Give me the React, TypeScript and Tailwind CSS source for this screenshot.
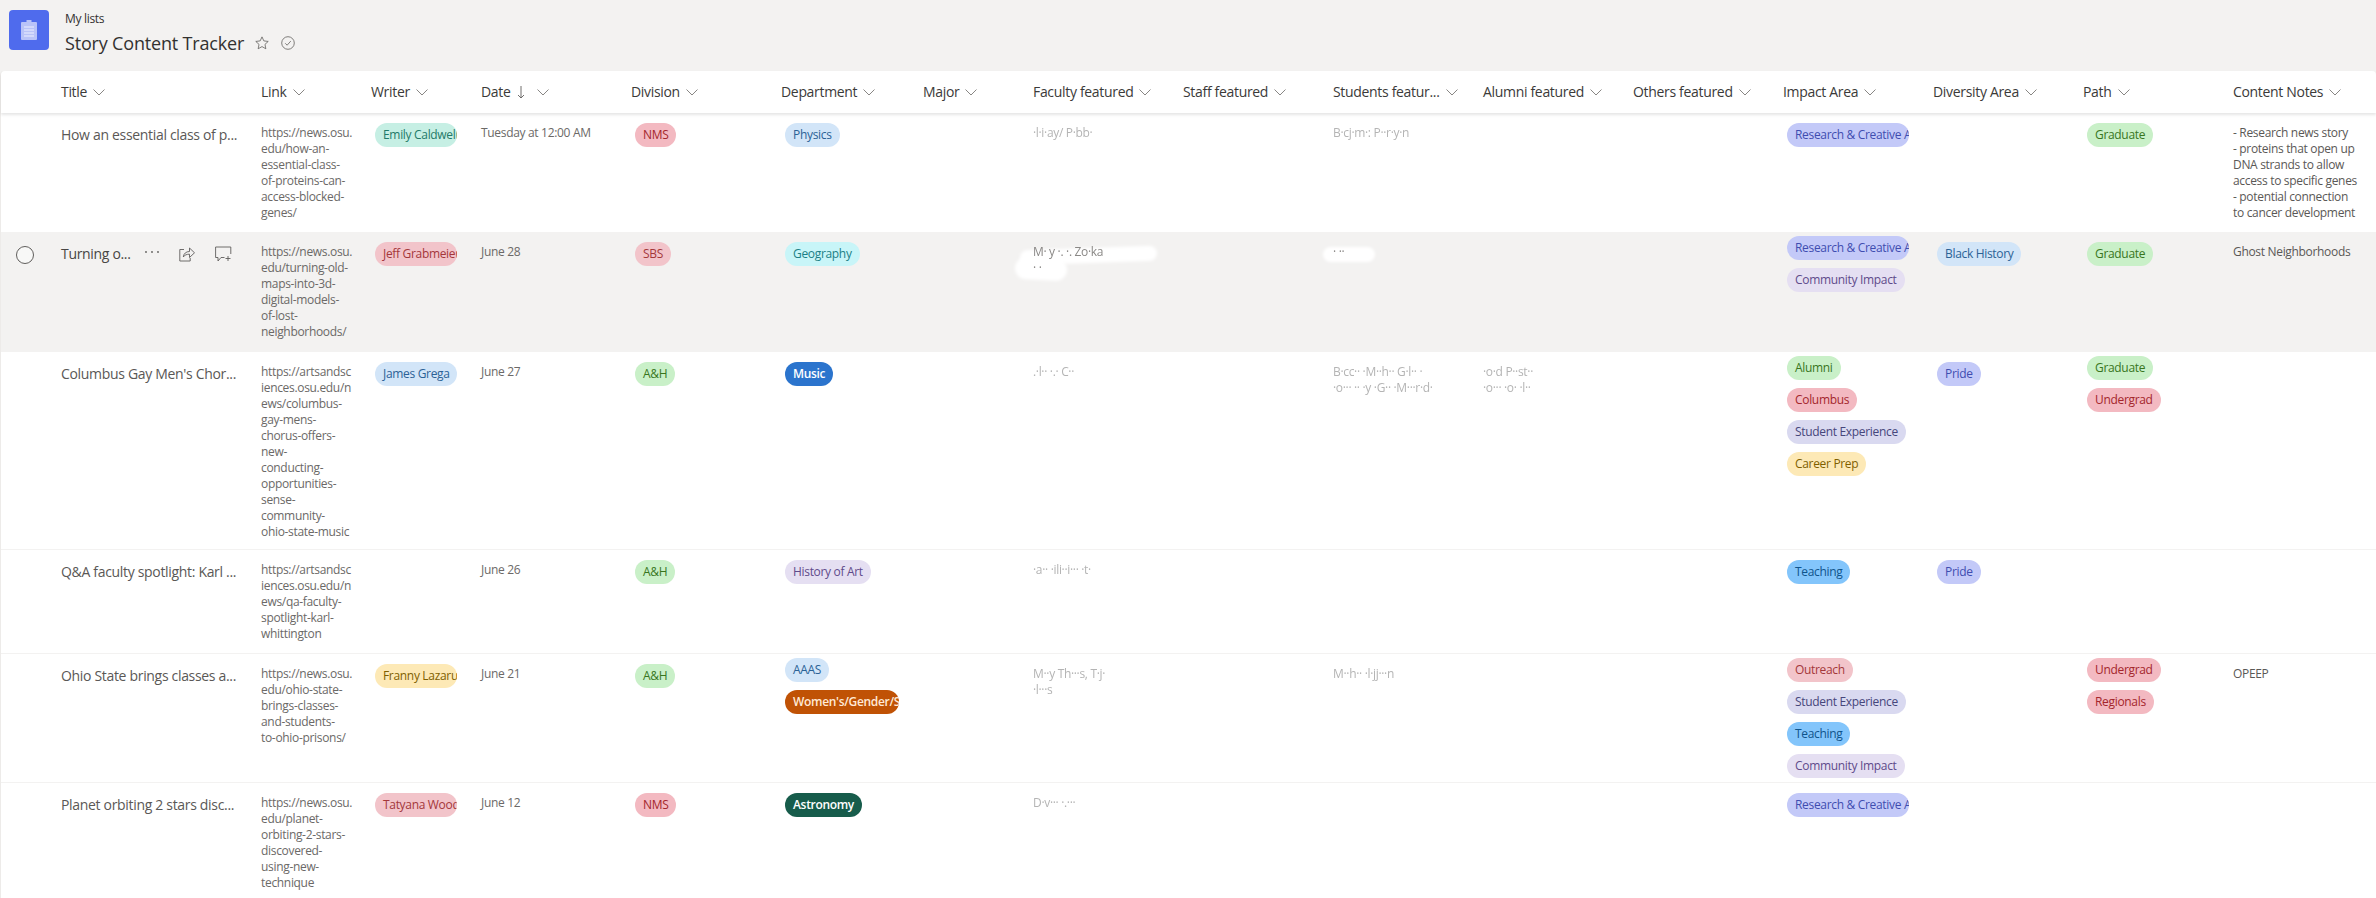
import React from 'react';

const gridCols =
  'grid grid-cols-[60px_200px_110px_110px_150px_150px_142px_110px_150px_150px_150px_150px_150px_150px_150px_150px_143px]';

const columns = [
  'Title', 'Link', 'Writer', 'Date', 'Division', 'Department', 'Major', 'Faculty featured', 'Staff featured',
  'Students featur...', 'Alumni featured', 'Others featured', 'Impact Area', 'Diversity Area', 'Path', 'Content Notes',
];

// pill colours, fluent style tints
const tone = {
  teal: 'bg-[#c6efe4] text-[#1f7a68]',
  red: 'bg-[#f3b9c1] text-[#a4262c]',
  rose: 'bg-[#f2c4ca] text-[#a4373a]',
  blue: 'bg-[#d2e5f8] text-[#2b6296]',
  cyan: 'bg-[#c8f5f8] text-[#1b7f86]',
  green: 'bg-[#c9f0c8] text-[#38761d]',
  lilac: 'bg-[#e5dff2] text-[#5f4b8b]',
  indigo: 'bg-[#c3c9f8] text-[#3f4db0]',
  slate: 'bg-[#d9d9f0] text-[#46467c]',
  sky: 'bg-[#83c5fb] text-[#0f548c]',
  yellow: 'bg-[#fde9b6] text-[#7f5f00]',
  music: 'bg-[#2b74cd] text-white font-semibold',
  rust: 'bg-[#c05205] text-[#ffe9d6] font-semibold',
  forest: 'bg-[#175c4b] text-white font-semibold',
};

type Tone = keyof typeof tone;
type Tag = [string, Tone];

function Pill({ label, color }: { label: string; color: Tone }) {
  return (
    <div className={`h-6 max-w-full w-fit rounded-xl px-2 text-xs leading-6 whitespace-nowrap overflow-hidden ${tone[color]}`}>
      {label}
    </div>
  );
}

function Pills({ tags }: { tags?: Tag[] }) {
  if (!tags) return <div />;
  return (
    <div className={`min-w-0 pl-1 pr-6 flex flex-col gap-2 ${tags.length > 1 ? 'pt-1' : 'pt-2.5'}`}>
      {tags.map(([label, color]) => (
        <Pill key={label} label={label} color={color} />
      ))}
    </div>
  );
}

function Lines({ lines, color = 'text-[#6b6967]' }: { lines?: string[]; color?: string }) {
  return (
    <div className={`pt-3 text-xs leading-4 whitespace-nowrap ${color}`}>
      {lines?.map((line) => <div key={line}>{line}</div>)}
    </div>
  );
}

// names scrubbed in the source picture, only broken specks remain
function Scrubbed({ lines, blobs, dark }: { lines?: string[]; blobs?: string[]; dark?: boolean }) {
  return (
    <div className={`relative pt-3 text-xs leading-4 whitespace-nowrap ${dark ? 'text-[#8a8886]' : 'text-[#b4b4b4]'}`}>
      {blobs?.map((b) => <div key={b} className={`absolute bg-white rounded-full blur-[1.5px] ${b}`} />)}
      {lines?.map((line) => <div key={line} className="relative blur-[0.4px]">{line}</div>)}
    </div>
  );
}

function Chevron() {
  return (
    <svg viewBox="0 0 12 7" className="w-3 h-[7px] shrink-0" fill="none" stroke="#7a7876" strokeWidth="0.9">
      <path d="M0.5 0.5 6 6l5.5-5.5" />
    </svg>
  );
}

function Header() {
  return (
    <div className={`${gridCols} relative z-10 h-[42px] items-center bg-white rounded-t shadow-[0_2px_3px_rgba(0,0,0,0.1)]`}>
      <div />
      {columns.map((c) => (
        <div key={c} className="flex items-center gap-1.5 text-sm text-[#3b3a39] whitespace-nowrap">
          <span>{c}</span>
          {c === 'Date' && (
            <svg viewBox="0 0 8 14" className="w-2 h-3.5 mr-1.5" fill="none" stroke="#605e5c" strokeWidth="0.9">
              <path d="M4 1v12M1 10l3 3 3-3" />
            </svg>
          )}
          <Chevron />
        </div>
      ))}
    </div>
  );
}

function RowActions() {
  return (
    <div className="self-start flex items-center mt-3 h-5 text-sm text-[#484644]">
      <span className="w-[83px] whitespace-nowrap">Turning o...</span>
      <svg viewBox="0 0 16 4" className="w-4 h-1 -mt-1" fill="#605e5c">
        <circle cx="2" cy="2" r="0.9" />
        <circle cx="8" cy="2" r="0.9" />
        <circle cx="14" cy="2" r="0.9" />
      </svg>
      <svg viewBox="0 0 16 16" className="w-4 h-4 ml-[19px]" fill="none" stroke="#605e5c" strokeWidth="0.9">
        <path d="M5 3.500H.8V15h10.400v-3M4.300 11c.3-3.400 2.800-5.500 6.200-5.500V2l5 4.800-5 4.700V8.200c-2.800 0-4.900.8-6.200 2.800z" />
      </svg>
      <svg viewBox="0 0 17 16" className="w-[17px] h-4 ml-[20px]" fill="none" stroke="#605e5c" strokeWidth="0.9">
        <path d="M9.500 11.500H6L3 15v-3.500H.6V1h15.200v7M13 10v5M10.500 12.500h5" />
      </svg>
    </div>
  );
}

type Row = {
  h: string;
  hover?: boolean;
  title?: string;
  link: string[];
  writer?: Tag;
  date: string;
  division: Tag;
  dept: Tag[];
  faculty?: string[];
  facultyBlobs?: string[];
  students?: string[];
  studentBlobs?: string[];
  alumni?: string[];
  impact: Tag[];
  diversity?: Tag[];
  path?: Tag[];
  notes?: string[];
};

const research: Tag = ['Research & Creative Activity', 'indigo'];
const grad: Tag = ['Graduate', 'green'];
const undergrad: Tag = ['Undergrad', 'red'];
const aandh: Tag = ['A&H', 'green'];
const pride: Tag = ['Pride', 'indigo'];
const studentExp: Tag = ['Student Experience', 'slate'];
const community: Tag = ['Community Impact', 'lilac'];
const teaching: Tag = ['Teaching', 'sky'];

const rows: Row[] = [
  {
    h: 'h-[119px]',
    title: 'How an essential class of p...',
    link: ['https://news.osu.', 'edu/how-an-', 'essential-class-', 'of-proteins-can-', 'access-blocked-', 'genes/'],
    writer: ['Emily Caldwell', 'teal'],
    date: 'Tuesday at 12:00 AM',
    division: ['NMS', 'red'],
    dept: [['Physics', 'blue']],
    faculty: ['  ·l·i·ay/ P·bb·'],
    students: ['B·cj·m·: P··r·y·n'],
    impact: [research],
    path: [grad],
    notes: ['- Research news story', '- proteins that open up', 'DNA strands to allow', 'access to specific genes', '- potential connection', 'to cancer development'],
  },
  {
    h: 'h-[120px]',
    hover: true,
    link: ['https://news.osu.', 'edu/turning-old-', 'maps-into-3d-', 'digital-models-', 'of-lost-', 'neighborhoods/'],
    writer: ['Jeff Grabmeier', 'rose'],
    date: 'June 28',
    division: ['SBS', 'rose'],
    dept: [['Geography', 'cyan']],
    faculty: ['M·    y ·. ·. Zo·ka', '     ·  ·'],
    facultyBlobs: ['-left-[13px] top-[16px] w-[137px] h-[15px] -rotate-2', '-left-[18px] top-[26px] w-[52px] h-[22px] rotate-3'],
    students: ['·  ·· '],
    studentBlobs: ['-left-[10px] top-[15px] w-[52px] h-[15px]'],
    impact: [research, community],
    diversity: [['Black History', 'blue']],
    path: [grad],
    notes: ['Ghost Neighborhoods'],
  },
  {
    h: 'h-[198px] border-b border-[#f3f2f1]',
    title: "Columbus Gay Men's Chor...",
    link: ['https://artsandsc', 'iences.osu.edu/n', 'ews/columbus-', 'gay-mens-', 'chorus-offers-', 'new-', 'conducting-', 'opportunities-', 'sense-', 'community-', 'ohio-state-music'],
    writer: ['James Grega', 'blue'],
    date: 'June 27',
    division: aandh,
    dept: [['Music', 'music']],
    faculty: ['.·l·· ·.· C··'],
    students: ['B·cc·· ·M··h·· G·l·· ·', '·o··· ·· ·y ·G·· ·M···r·d·'],
    alumni: ['·o·d P··st··', '·o··· ·o· ·l··'],
    impact: [['Alumni', 'green'], ['Columbus', 'red'], studentExp, ['Career Prep', 'yellow']],
    diversity: [pride],
    path: [grad, undergrad],
  },
  {
    h: 'h-[104px] border-b border-[#f3f2f1]',
    title: 'Q&A faculty spotlight: Karl ...',
    link: ['https://artsandsc', 'iences.osu.edu/n', 'ews/qa-faculty-', 'spotlight-karl-', 'whittington'],
    date: 'June 26',
    division: aandh,
    dept: [['History of Art', 'lilac']],
    faculty: ['·a·· ·ili··i··· ·t·'],
    impact: [teaching],
    diversity: [pride],
  },
  {
    h: 'h-[129px] border-b border-[#f3f2f1]',
    title: 'Ohio State brings classes a...',
    link: ['https://news.osu.', 'edu/ohio-state-', 'brings-classes-', 'and-students-', 'to-ohio-prisons/'],
    writer: ['Franny Lazarus', 'yellow'],
    date: 'June 21',
    division: aandh,
    dept: [['AAAS', 'blue'], ["Women's/Gender/Sexuality", 'rust']],
    faculty: ['M··y Th···s, T·j·', '·l···s'],
    students: ['M··h·· ·l·jj···n'],
    impact: [['Outreach', 'rose'], studentExp, teaching, community],
    path: [undergrad, ['Regionals', 'red']],
    notes: ['OPEEP'],
  },
  {
    h: 'h-[120px]',
    title: 'Planet orbiting 2 stars disc...',
    link: ['https://news.osu.', 'edu/planet-', 'orbiting-2-stars-', 'discovered-', 'using-new-', 'technique'],
    writer: ['Tatyana Woodall', 'rose'],
    date: 'June 12',
    division: ['NMS', 'red'],
    dept: [['Astronomy', 'forest']],
    faculty: ['D·v··· ·.···'],
    impact: [research],
  },
];

function TableRow({ row }: { row: Row }) {
  return (
    <div className={`${gridCols} ${row.h} ${row.hover ? 'bg-[#f3f2f1]' : 'bg-white'} overflow-hidden`}>
      <div className="pl-[15px] pt-3.5">
        {row.hover && <div className="w-[18px] h-[18px] rounded-full border border-[#605e5c] bg-[#f8f8f7]" />}
      </div>
      {row.title ? (
        <div className="pt-3 text-sm text-[#5a5856] whitespace-nowrap">{row.title}</div>
      ) : (
        <RowActions />
      )}
      <Lines lines={row.link} />
      <Pills tags={row.writer ? [row.writer] : undefined} />
      <Lines lines={[row.date]} />
      <Pills tags={[row.division]} />
      <Pills tags={row.dept} />
      <div />
      <Scrubbed lines={row.faculty} blobs={row.facultyBlobs} dark={row.hover} />
      <div />
      <Scrubbed lines={row.students} blobs={row.studentBlobs} dark={row.hover} />
      <Scrubbed lines={row.alumni} />
      <div />
      <Pills tags={row.impact} />
      <Pills tags={row.diversity} />
      <Pills tags={row.path} />
      <Lines lines={row.notes} color="text-[#5a5856]" />
    </div>
  );
}

export default function App() {
  return (
    <div className="h-[898px] w-[2376px] overflow-hidden bg-[#f3f2f1] font-['Open_Sans',sans-serif] tracking-[-0.02em]">
      <div className="h-[71px] flex items-start pl-[9px] pt-2.5">
        <div className="w-10 h-10 rounded bg-[#4f6bed] flex items-center justify-center">
          <svg viewBox="0 0 16 20" className="w-4 h-5">
            <path d="M5.500 0h5v2H15a1 1 0 0 1 1 1v16a1 1 0 0 1-1 1H1a1 1 0 0 1-1-1V3a1 1 0 0 1 1-1h4.500z" fill="#b9c3f8" />
            <path d="M3 7h10M3 10h10M3 13h10M3 16h10" stroke="#eef0fe" strokeWidth="1.2" />
          </svg>
        </div>
        <div className="ml-4">
          <div className="text-xs leading-[18px] text-[#323130]">My lists</div>
          <div className="mt-px flex items-center">
            <span className="text-lg leading-7 font-medium text-[#323130] tracking-[-0.01em]">Story Content Tracker</span>
            <svg viewBox="0 0 16 16" className="w-3.5 h-3.5 ml-[11px]" fill="none" stroke="#605e5c" strokeWidth="0.9">
              <path d="M8 1l2.100 4.600 5 .6-3.700 3.400 1 5L8 12.100 3.600 14.600l1-5L.9 6.200l5-.6z" />
            </svg>
            <svg viewBox="0 0 16 16" className="w-3.5 h-3.5 ml-3" fill="none" stroke="#605e5c" strokeWidth="0.9">
              <circle cx="8" cy="8" r="7.200" />
              <path d="M4.800 8.300l2.200 2.200 4.200-4.700" />
            </svg>
          </div>
        </div>
      </div>
      <div className="border-l border-[#edebe9] rounded-tl">
        <Header />
        {rows.map((row) => (
          <TableRow key={row.date} row={row} />
        ))}
      </div>
    </div>
  );
}
